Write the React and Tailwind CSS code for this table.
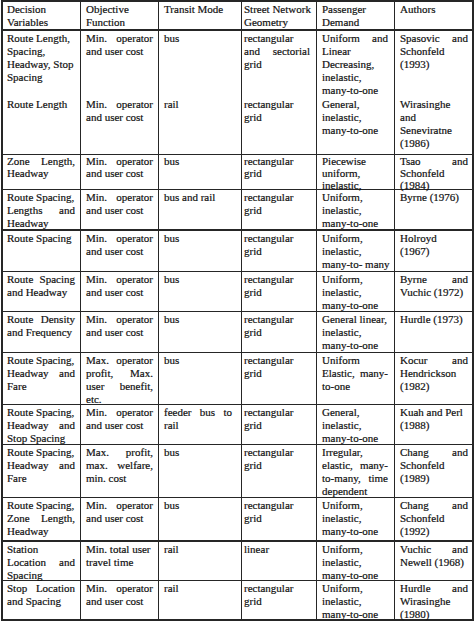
const MO = ['~Min. operator', 'and user cost'];
const RG = ['rectangular', 'grid'];
const UIM = ['Uniform,', 'inelastic,', 'many-to-one'];

// b: bottom line of the row (0 none, 1 thin, 2 thick)
const rows = [
  { h: 29, b: 2, cells: [['Decision', 'Variables'], ['Objective', 'Function'], ['Transit Mode'], ['Street Network', 'Geometry'], ['Passenger', 'Demand'], ['Authors']] },
  {
    h: 66, b: 0,
    cells: [
      ['Route Length,', 'Spacing,', 'Headway, Stop', 'Spacing'],
      MO,
      ['bus'],
      ['rectangular', '~and sectorial', 'grid'],
      ['~Uniform and', 'Linear', 'Decreasing,', 'inelastic,', 'many-to-one'],
      ['~Spasovic and', 'Schonfeld', '(1993)']
    ]
  },
  {
    h: 58, b: 1,
    cells: [['Route Length'], MO, ['rail'], RG, ['General,', 'inelastic,', 'many-to-one'], ['Wirasinghe', 'and', 'Seneviratne', '(1986)']]
  },
  {
    h: 35, b: 1, tight: true,
    cells: [['~Zone Length,', 'Headway'], MO, ['bus'], RG, ['Piecewise', 'uniform,', 'inelastic,'], ['~Tsao and', 'Schonfeld', '(1984)']]
  },
  {
    h: 41, b: 2,
    cells: [['Route Spacing,', '~Lengths and', 'Headway'], MO, ['bus and rail'], RG, UIM, ['Byrne (1976)']]
  },
  {
    h: 41, b: 1,
    cells: [['Route Spacing'], MO, ['bus'], RG, ['Uniform,', 'inelastic,', 'many-to- many'], ['Holroyd', '(1967)']]
  },
  {
    h: 40, b: 1,
    cells: [['~Route Spacing', 'and Headway'], MO, ['bus'], RG, UIM, ['~Byrne and', 'Vuchic (1972)']]
  },
  {
    h: 41, b: 1,
    cells: [['~Route Density', 'and Frequency'], MO, ['bus'], RG, ['General linear,', 'inelastic,', 'many-to-one'], ['Hurdle (1973)']]
  },
  {
    h: 52, b: 1,
    cells: [
      ['Route Spacing,', '~Headway and', 'Fare'],
      ['~Max. operator', '~profit, Max.', '~user benefit,', 'etc.'],
      ['bus'],
      RG,
      ['Uniform', '~Elastic, many-', 'to-one'],
      ['~Kocur and', 'Hendrickson', '(1982)']
    ]
  },
  {
    h: 40, b: 1,
    cells: [['Route Spacing,', '~Headway and', 'Stop Spacing'], MO, ['~feeder bus to', 'rail'], RG, ['General,', 'inelastic,', 'many-to-one'], ['Kuah and Perl', '(1988)']]
  },
  {
    h: 53, b: 1,
    cells: [
      ['Route Spacing,', '~Headway and', 'Fare'],
      ['~Max. profit,', '~max. welfare,', 'min. cost'],
      ['bus'],
      RG,
      ['Irregular,', '~elastic, many-', '~to-many, time', 'dependent'],
      ['~Chang and', 'Schonfeld', '(1989)']
    ]
  },
  {
    h: 44, b: 2,
    cells: [['Route Spacing,', '~Zone Length,', 'Headway'], MO, ['bus'], RG, UIM, ['~Chang and', 'Schonfeld', '(1992)']]
  },
  {
    h: 39, b: 1,
    cells: [['Station', '~Location and', 'Spacing'], ['Min. total user', 'travel time'], ['rail'], ['linear'], UIM, ['~Vuchic and', 'Newell (1968)']]
  },
  {
    h: 38, b: 0,
    cells: [['~Stop Location', 'and Spacing'], MO, ['rail'], RG, UIM, ['~Hurdle and', 'Wirasinghe', '(1980)']]
  }
];

const colPad = [
  'pl-[4px] pr-[5px] border-r border-[#262626]',
  'pl-[5px] pr-[5px] border-r border-[#262626]',
  'pl-[5px] pr-[9px] border-r border-[#262626]',
  'pl-[2px] pr-[6px] border-r border-[#262626]',
  'pl-[5px] pr-[6px] border-r border-[#262626]',
  'pl-[5px] pr-[4px]'
];

const rowLine = ['', 'border-b border-[#262626]', 'border-b-2 border-[#262626]'];

function Line({ text }) {
  if (text.startsWith('~')) {
    return <div className="text-justify [text-align-last:justify]">{text.slice(1)}</div>;
  }
  return <div className="whitespace-nowrap">{text}</div>;
}

export default function App() {
  return (
    <div className="min-h-[622px] bg-white pl-[1px] [font-family:'Liberation_Serif','Times_New_Roman',serif] text-[11px] leading-[13px] text-[#111111] [-webkit-text-stroke:0.2px_#111111]">
      <div className="w-[473px] border-2 border-[#262626]">
        {rows.map((row, i) => (
          <div
            key={i}
            className={`grid grid-cols-[78px_78px_83px_75px_78px_77px] ${rowLine[row.b]}`}
            style={{ height: row.h }}
          >
            {row.cells.map((lines, c) => (
              <div key={c} className={`${colPad[c]} ${row.tight ? 'leading-[12px]' : 'pt-[1px]'}`}>
                {lines.map((t, k) => (
                  <Line key={k} text={t} />
                ))}
              </div>
            ))}
          </div>
        ))}
      </div>
    </div>
  );
}
